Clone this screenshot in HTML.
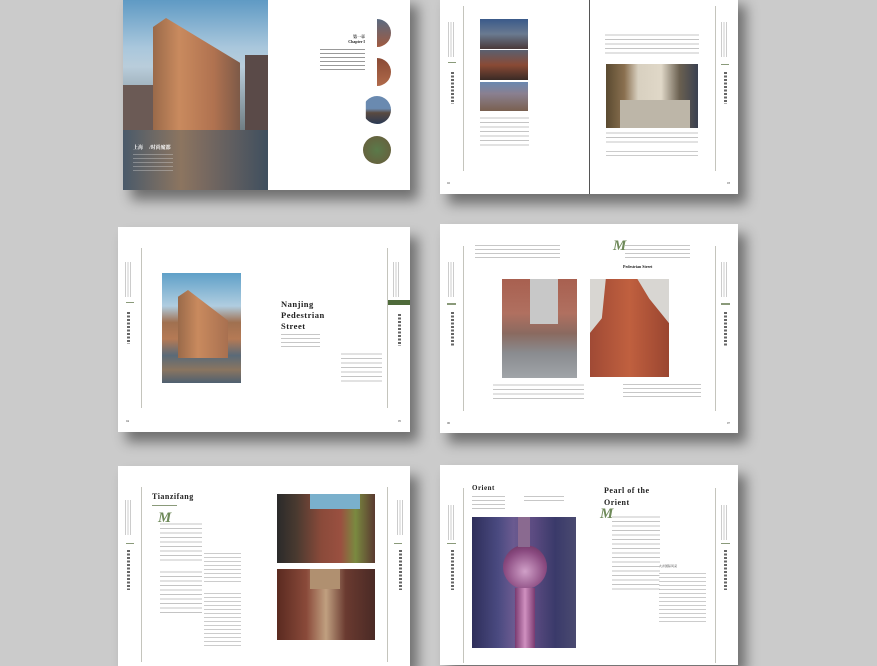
<!DOCTYPE html>
<html><head><meta charset="utf-8"><style>
*{margin:0;padding:0;box-sizing:border-box}
body{width:877px;height:658px;background:#cbcbcb;position:relative;overflow:hidden;font-family:"Liberation Serif","Noto Serif CJK SC",serif}
.pg{position:absolute;background:#fff;box-shadow:8px 10px 12px rgba(0,0,0,.45)}
.a{position:absolute}
.vl{position:absolute;width:1px;background:#c4c4bc}
.gl{position:absolute;height:2px;background:#8a9a7a}
.lines{position:absolute;background:repeating-linear-gradient(#fff 0 1.5px,#c4c4c4 1.5px 2.5px,#fff 2.5px 4.5px)}
.lines2{position:absolute;background:repeating-linear-gradient(#fff 0 1px,#999 1px 2px,#fff 2px 4px)}
.h{position:absolute;font-weight:bold;color:#222;letter-spacing:.5px}
.n{position:absolute;font-size:3px;color:#333}
.vt{position:absolute;width:3px;background:repeating-linear-gradient(#666 0 2px,#fff 2px 3.5px)}
.side{position:absolute;width:6px;background:repeating-linear-gradient(90deg,#ccc 0 1px,#fff 1px 2.5px)}
.M{position:absolute;font-style:italic;color:#6f8a5a;font-size:15px;font-weight:bold}
</style></head><body>

<!-- Spread 1 -->
<div class="pg" style="left:123px;top:-5px;width:287px;height:195px"></div>
<div class="a" style="left:123px;top:0;width:145px;height:190px;background:linear-gradient(180deg,#5f9ac4 0%,#a9c7dc 25%,#b9cddb 35%,#6d7a80 70%,#8b7b6a 80%,#4f5e6c 100%)"></div>
<div class="a" style="left:153px;top:18px;width:87px;height:112px;background:linear-gradient(90deg,#9a6a4a,#c98a5e 30%,#b07250 70%,#7d5a48);clip-path:polygon(0 8%,15% 0,100% 40%,100% 100%,0 100%)"></div>
<div class="a" style="left:123px;top:85px;width:30px;height:45px;background:#6b5a55"></div>
<div class="a" style="left:245px;top:55px;width:23px;height:75px;background:#5a4a48"></div>
<div class="a" style="left:123px;top:130px;width:145px;height:60px;background:linear-gradient(90deg,#4a5a6a,#8c7560 40%,#7a6a60 55%,#3f4f5f)"></div>
<div class="a" style="left:133px;top:144px;font-size:5px;color:#fff;font-weight:bold">上海　 /时尚魔都</div>
<div class="a" style="left:133px;top:152px;width:40px;height:20px;background:repeating-linear-gradient(#fff0 0 2px,#ddd 2px 2.5px,#fff0 2.5px 4px);opacity:.7"></div>
<div class="a" style="left:343px;top:34px;font-size:4px;font-weight:bold;color:#222;text-align:right;width:22px;line-height:5px">第一章<br>Chapter I</div>
<div class="lines2" style="left:320px;top:48px;width:45px;height:24px"></div>
<div class="a" style="left:363px;top:19px;width:28px;height:28px;border-radius:50%;background:linear-gradient(#5a6a80,#a05a40);clip-path:inset(0 0 0 50%)"></div>
<div class="a" style="left:363px;top:58px;width:28px;height:28px;border-radius:50%;background:linear-gradient(#8a4a35,#b06a4a);clip-path:inset(0 0 0 50%)"></div>
<div class="a" style="left:363px;top:96px;width:28px;height:28px;border-radius:50%;background:linear-gradient(#6a8ab0 0 45%,#5a4a40 60%,#2a3a55);clip-path:inset(0 0 0 10%)"></div>
<div class="a" style="left:363px;top:136px;width:28px;height:28px;border-radius:50%;background:radial-gradient(#5a7a4a,#6a5a3a)"></div>

<!-- Spread 2 -->
<div class="pg" style="left:440px;top:-5px;width:298px;height:199px"></div>
<div class="a" style="left:589px;top:0;width:1px;height:194px;background:#555"></div>
<div class="vl" style="left:463px;top:6px;height:165px"></div>
<div class="vl" style="left:715px;top:6px;height:165px"></div>
<div class="side" style="left:448px;top:22px;height:35px"></div>
<div class="gl" style="left:448px;top:62px;width:8px;height:1px"></div>
<div class="vt" style="left:451px;top:72px;height:32px"></div>
<div class="side" style="left:721px;top:22px;height:35px"></div>
<div class="gl" style="left:721px;top:64px;width:8px;height:1px"></div>
<div class="vt" style="left:724px;top:72px;height:32px"></div>
<div class="a" style="left:480px;top:19px;width:48px;height:30px;background:linear-gradient(#3a5a8a,#6a7a90 50%,#4a3a3a)"></div>
<div class="a" style="left:480px;top:50px;width:48px;height:30px;background:linear-gradient(#5a6070,#8a4a35 50%,#3a2a25)"></div>
<div class="a" style="left:480px;top:82px;width:48px;height:29px;background:linear-gradient(#6a88b0,#8a8090 40%,#7a6050)"></div>
<div class="lines" style="left:480px;top:116px;width:49px;height:32px"></div>
<div class="lines" style="left:605px;top:33px;width:94px;height:24px"></div>
<div class="a" style="left:606px;top:64px;width:92px;height:64px;background:linear-gradient(90deg,#5a4a30,#8a7050 20%,#d8d0c0 35%,#e0d8c8 60%,#6a6050 80%,#3a4050)"></div>
<div class="a" style="left:620px;top:100px;width:70px;height:28px;background:#bdb6a8"></div>
<div class="lines" style="left:606px;top:131px;width:92px;height:12px"></div>
<div class="lines2" style="left:606px;top:150px;width:92px;height:7px;opacity:.5"></div>
<div class="n" style="left:447px;top:181px">02</div><div class="n" style="left:727px;top:181px">03</div>

<!-- Spread 3 -->
<div class="pg" style="left:118px;top:227px;width:292px;height:205px"></div>
<div class="vl" style="left:141px;top:248px;height:160px"></div>
<div class="vl" style="left:387px;top:248px;height:160px"></div>
<div class="side" style="left:125px;top:262px;height:35px"></div>
<div class="gl" style="left:126px;top:302px;width:8px;height:1px"></div>
<div class="vt" style="left:127px;top:312px;height:32px"></div>
<div class="side" style="left:393px;top:262px;height:35px"></div>
<div class="a" style="left:388px;top:300px;width:22px;height:5px;background:#4e6a3a"></div>
<div class="vt" style="left:398px;top:314px;height:32px"></div>
<div class="a" style="left:162px;top:273px;width:79px;height:110px;background:linear-gradient(180deg,#5fa0c8 0%,#b0cde0 30%,#a07050 45%,#b57a55 60%,#5a6a78 75%,#8a7560 88%,#4f6070)"></div>
<div class="a" style="left:178px;top:290px;width:50px;height:68px;background:linear-gradient(90deg,#9a6a4a,#c98a5e 40%,#a87050);clip-path:polygon(0 10%,20% 0,100% 45%,100% 100%,0 100%)"></div>
<div class="h" style="left:281px;top:299px;font-size:8.5px;line-height:11px">Nanjing<br>Pedestrian<br>Street</div>
<div class="lines2" style="left:281px;top:333px;width:39px;height:17px;opacity:.55"></div>
<div class="lines" style="left:341px;top:352px;width:41px;height:33px"></div>
<div class="n" style="left:126px;top:419px">04</div><div class="n" style="left:398px;top:419px">05</div>

<!-- Spread 4 -->
<div class="pg" style="left:440px;top:224px;width:298px;height:209px"></div>
<div class="vl" style="left:463px;top:246px;height:165px"></div>
<div class="vl" style="left:715px;top:246px;height:165px"></div>
<div class="side" style="left:448px;top:262px;height:35px"></div>
<div class="gl" style="left:447px;top:303px;width:9px"></div>
<div class="vt" style="left:451px;top:312px;height:35px"></div>
<div class="side" style="left:721px;top:262px;height:35px"></div>
<div class="gl" style="left:721px;top:303px;width:9px"></div>
<div class="vt" style="left:724px;top:312px;height:35px"></div>
<div class="lines2" style="left:475px;top:244px;width:85px;height:15px;opacity:.55"></div>
<div class="M" style="left:613px;top:238px">M</div>
<div class="lines2" style="left:625px;top:244px;width:65px;height:15px;opacity:.55"></div>
<div class="a" style="left:623px;top:264px;font-size:4px;font-weight:bold;color:#222">Pedestrian Street</div>
<div class="a" style="left:502px;top:279px;width:75px;height:99px;background:linear-gradient(180deg,#a86050 0%,#b07060 35%,#8a6a60 55%,#8a8c90 75%,#a0a4a8)"></div>
<div class="a" style="left:530px;top:279px;width:28px;height:45px;background:#c8c8c8"></div>
<div class="a" style="left:590px;top:279px;width:79px;height:98px;background:#d8d6d2"></div>
<div class="a" style="left:590px;top:279px;width:79px;height:98px;background:linear-gradient(90deg,#a04a35,#c0603f 50%,#9a4530);clip-path:polygon(20% 0,60% 0,75% 20%,100% 45%,100% 100%,0 100%,0 55%,15% 40%)"></div>
<div class="lines" style="left:493px;top:383px;width:91px;height:19px"></div>
<div class="lines2" style="left:623px;top:383px;width:78px;height:15px;opacity:.55"></div>
<div class="n" style="left:447px;top:421px">06</div><div class="n" style="left:727px;top:421px">07</div>

<!-- Spread 5 -->
<div class="pg" style="left:118px;top:466px;width:292px;height:200px"></div>
<div class="vl" style="left:141px;top:487px;height:175px"></div>
<div class="vl" style="left:387px;top:487px;height:175px"></div>
<div class="side" style="left:125px;top:500px;height:35px"></div>
<div class="gl" style="left:126px;top:543px;width:8px;height:1px"></div>
<div class="vt" style="left:127px;top:550px;height:40px"></div>
<div class="side" style="left:397px;top:500px;height:35px"></div>
<div class="gl" style="left:394px;top:543px;width:8px;height:1px"></div>
<div class="vt" style="left:399px;top:550px;height:40px"></div>
<div class="h" style="left:152px;top:492px;font-size:8px">Tianzifang</div>
<div class="gl" style="left:152px;top:505px;width:25px;height:1px"></div>
<div class="M" style="left:158px;top:510px">M</div>
<div class="lines" style="left:160px;top:522px;width:42px;height:40px"></div>
<div class="lines" style="left:160px;top:570px;width:42px;height:45px"></div>
<div class="lines2" style="left:204px;top:552px;width:37px;height:33px;opacity:.5"></div>
<div class="lines2" style="left:204px;top:592px;width:37px;height:55px;opacity:.5"></div>
<div class="a" style="left:277px;top:494px;width:98px;height:69px;background:linear-gradient(90deg,#2a2a2a,#4a3a30 20%,#8a4a3a 45%,#9a5040 65%,#7a8a40 80%,#5a3a30)"></div>
<div class="a" style="left:310px;top:494px;width:50px;height:15px;background:#7ab0cc"></div>
<div class="a" style="left:277px;top:569px;width:98px;height:71px;background:linear-gradient(90deg,#5a2a20,#8a4a3a 30%,#c0a080 50%,#6a3a30 70%,#4a2a25)"></div>
<div class="a" style="left:310px;top:569px;width:30px;height:20px;background:#b09070"></div>

<!-- Spread 6 -->
<div class="pg" style="left:440px;top:465px;width:298px;height:200px"></div>
<div class="vl" style="left:463px;top:488px;height:175px"></div>
<div class="vl" style="left:715px;top:488px;height:175px"></div>
<div class="side" style="left:448px;top:505px;height:35px"></div>
<div class="gl" style="left:447px;top:543px;width:9px;height:1px"></div>
<div class="vt" style="left:451px;top:550px;height:40px"></div>
<div class="side" style="left:721px;top:505px;height:35px"></div>
<div class="gl" style="left:721px;top:543px;width:9px;height:1px"></div>
<div class="vt" style="left:724px;top:550px;height:40px"></div>
<div class="h" style="left:472px;top:484px;font-size:7px">Orient</div>
<div class="lines2" style="left:472px;top:495px;width:33px;height:14px;opacity:.55"></div>
<div class="lines2" style="left:524px;top:495px;width:40px;height:6px;opacity:.55"></div>
<div class="a" style="left:472px;top:517px;width:104px;height:131px;background:linear-gradient(90deg,#2e2e5a,#4a4a80 25%,#6a5a90 40%,#5a4a80 60%,#3a3a6a 80%,#4a4a70)"></div>
<div class="a" style="left:503px;top:545px;width:44px;height:44px;border-radius:50%;background:radial-gradient(circle at 50% 60%,#d0a0c8,#8a4a80 60%,#5a2a50)"></div>
<div class="a" style="left:518px;top:517px;width:12px;height:30px;background:#8a6a90"></div>
<div class="a" style="left:515px;top:588px;width:20px;height:60px;background:linear-gradient(90deg,#7a3a70,#d090c0,#7a3a70)"></div>
<div class="h" style="left:604px;top:485px;font-size:8px;line-height:12px">Pearl of the<br>Orient</div>
<div class="M" style="left:600px;top:506px">M</div>
<div class="lines" style="left:612px;top:515px;width:48px;height:78px"></div>
<div class="a" style="left:659px;top:564px;font-size:3px;color:#333">大井国际风采</div>
<div class="lines2" style="left:659px;top:572px;width:47px;height:50px;opacity:.5"></div>
</body></html>
